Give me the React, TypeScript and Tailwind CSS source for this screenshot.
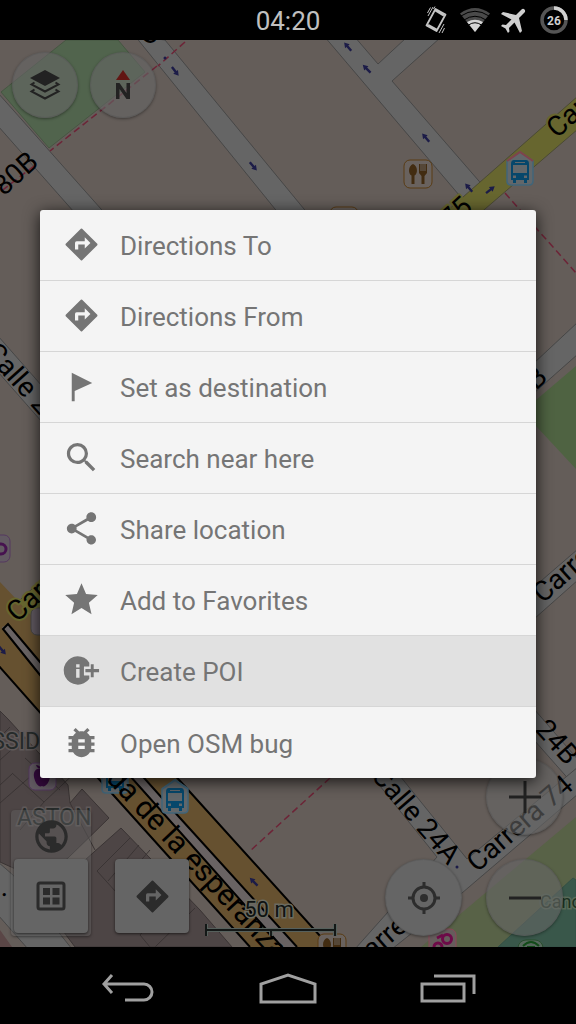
import { useState } from 'react';
import type { ReactNode } from 'react';
import { MdBugReport, MdFlight, MdPublic, MdSearch, MdShare, MdStar } from 'react-icons/md';

interface MenuItem {
  label: string;
  icon: ReactNode;
}

function DirectionsIcon() {
  return (
    <svg viewBox="0 0 24 24" className="w-[39px] h-[39px]" fill="currentColor">
      <path
        fillRule="evenodd"
        d="M12.400 2.300L21.700 11.600Q22 12 21.700 12.400L12.400 21.700Q12 22 11.600 21.700L2.300 12.400Q2 12 2.300 11.600L11.600 2.300Q12 2 12.400 2.300zM14 14.500L17.500 11L14 7.500V10H9Q8 10 8 11V15H10V12H14z"
      />
    </svg>
  );
}

function FlagIcon() {
  return (
    <svg viewBox="0 0 40 40" className="w-full h-full" fill="currentColor">
      <path d="M10 6L31 16.500L13 24.500V35H10z" />
    </svg>
  );
}

function PoiIcon() {
  return (
    <svg viewBox="0 0 40 40" className="w-full h-full overflow-visible" fill="currentColor">
      <path
        fillRule="evenodd"
        d="M16 5.500A14.500 14.500 0 1 0 28 28.500V25H22.500V16H28V12A14.500 14.500 0 0 0 16 5.500zM14.500 13.500H18V17H14.500zM14.500 18.500H18V27.500H14.500z"
      />
      <path d="M29.500 13.500H32.500V18.500H38V21.800H32.500V27H29.500V21.800H24V18.500H29.500z" />
    </svg>
  );
}

function LayersIcon() {
  return (
    <svg viewBox="0 0 32 32" className="w-8 h-8" fill="none" stroke="currentColor" strokeWidth="2">
      <path d="M16 1L31 9L16 17L1 9z" fill="currentColor" stroke="none" />
      <path d="M5.500 13.500L2.500 15.500L16 22.500L29.500 15.500L26.500 13.500" />
      <path d="M5.500 20.500L2.500 22.500L16 29.500L29.500 22.500L26.500 20.500" />
    </svg>
  );
}

function VibrateIcon() {
  return (
    <svg viewBox="0 0 24 28" className="w-6 h-7" fill="none" stroke="#c4c4c4">
      <path d="M11.500 3L21.500 8.500L12.500 25L2.500 19.500z" strokeWidth="1.800" strokeLinejoin="round" />
      <path d="M11 4L20 9.500M4 19L13 24" strokeWidth="2.500" />
      <path d="M9 1L4 10M6.500 1.500L3.500 7M11 0.500L9.500 3M20 18L15 27M20.500 22L18 27" strokeWidth="1" />
    </svg>
  );
}

function WifiIcon() {
  return (
    <svg viewBox="0 0 30 24" className="w-[30px] h-6">
      <path d="M0 5.500Q15 -5.500 30 5.500L15 24z" fill="#4a4a4a" />
      <path d="M7 14Q15 9.500 23 14L15 24z" fill="#d6d6d6" />
      <path d="M1 8Q15 -1.500 29 8M4 12Q15 4.500 26 12M8.500 17Q15 12.500 21.500 17" fill="none" stroke="#000" strokeWidth="1" />
    </svg>
  );
}

function BatteryIcon() {
  return (
    <svg viewBox="0 0 28 28" className="w-7 h-7" fill="none">
      <circle cx="14" cy="14" r="12" stroke="#555" strokeWidth="3.500" />
      <path d="M14 2A12 12 0 0 1 26 14" stroke="#d0d0d0" strokeWidth="3.500" />
      <text x="14" y="18.500" textAnchor="middle" fill="#cfcfcf" className="font-[Roboto,sans-serif] text-[12px] font-bold">
        26
      </text>
    </svg>
  );
}

function Arrow({ x, y, angle }: { x: number; y: number; angle: number }) {
  return (
    <path
      d="M-5 -1.200H1V-3L6 0L1 3V1.200H-5z"
      fill="#1c1c48"
      transform={`translate(${x} ${y}) rotate(${angle})`}
    />
  );
}

function BusStop({ x, y, roof }: { x: number; y: number; roof: string }) {
  return (
    <g transform={`translate(${x} ${y})`}>
      <path d="M-13 -8L0 -17L13 -8V12Q13 16 9 16H-9Q-13 16 -13 12z" fill="#62676a" stroke="#416579" strokeWidth="1.500" />
      <path d="M-13 -8L0 -17L13 -8" fill="none" stroke={roof} strokeWidth="2" />
      <path
        fillRule="evenodd"
        fill="#06476b"
        d="M-6 -9H6Q9 -9 9 -5V11H7V14H4V11H-4V14H-7V11H-9V-5Q-9 -9 -6 -9zM-7 -4V4H7V-4zM-5 -7V-6H5V-7zM-7 6.500V9H-4V6.500zM4 6.500V9H7V6.500z"
      />
    </g>
  );
}

function Restaurant({ x, y }: { x: number; y: number }) {
  return (
    <g transform={`translate(${x} ${y})`}>
      <rect x="-14" y="-14" width="28" height="28" rx="6" fill="#69625e" stroke="#5a3c14" />
      <path
        fill="#422c11"
        d="M-5 -10C-10 -8 -10 0 -6.500 1.500V10H-3.500V1.500C0 0 0 -8 -5 -10zM1 -10V-1L3.500 2V10H6.500V2L9 -1V-10H7.500V-3H6.500V-10H5.500V-3H4.500V-10H3.500V-3H2.500V-10z"
      />
    </g>
  );
}

function MapCanvas() {
  return (
    <svg
      viewBox="0 40 576 907"
      preserveAspectRatio="xMidYMid slice"
      className="absolute inset-0 w-full h-full bg-[#645d59]"
      aria-label="Map"
    >
      {/* parks */}
      <path d="M66 40H118L145 72L49 148L1 92z" fill="#51644d" stroke="#465642" />
      <path d="M536 400L576 366V469L536 426z" fill="#4f6342" />
      <path d="M576 817L421 947H576z" fill="#586247" />
      <path d="M573 878L498 947H576V880z" fill="#39574a" stroke="#345046" />

      {/* buildings */}
      <g fill="#4d4545" stroke="#3a3434">
        <path d="M0 711L8 719L68 785L70 803L82 789L109 818L68 858L40 880L0 862z" />
        <path d="M121 828L200 910L232 947H75L40 900z" />
        <path
          fill="none"
          d="M0 737L10 727M0 760L28 735M12 773L44 802L80 768M0 803L55 755M12 774L0 785M44 802L20 830M25 758L60 790M70 803L95 850M97 871L130 838M108 881L139 845M97 871L125 902M115 890L150 850M140 935L180 890M155 947L195 908M140 935L150 947"
        />
      </g>

      {/* streets */}
      <g fill="#656565" stroke="#474747">
        <path d="M-2 93L101 209L140 255H112L-2 126z" />
        <path d="M135 36L275 209L310 250H338L304 209L165 40z" />
        <path d="M324 36L465 202L485 188L392 81L440 38H406L378 64L354 36z" />
        <path d="M-2 336L42 386V422L-2 372z" />
        <path d="M534 363L578 322V354L534 393z" />
        <path d="M534 587L578 549V580L534 619z" />
        <path d="M534 709L580 762V792L534 740z" />
        <path d="M-2 862L13 875L72 949H28L-2 915z" />
        <path d="M372 776L437 857L355 949H392L462 893L578 794V767L467 859L400 776z" />
      </g>
      <path d="M0 930L12 947H0z" fill="#5a4646" />

      {/* secondary road */}
      <path d="M578 96L430 226L-2 620L20 640L485 209L578 129z" fill="#67662f" stroke="#4b4a34" />

      {/* avenue */}
      <path d="M-2 580L17 600L190 792L330 947H250L98 778L-2 665z" fill="#665130" />
      <path d="M2 627L40 675L180 832L282 947H297L180 818L40 662L8 625z" fill="#696363" />
      <g fill="none" stroke="#000" strokeWidth="2">
        <path d="M40 626L190 792L330 947" />
        <path d="M-2 665L98 778L250 947" />
        <path d="M282 947L180 832L40 675L3 629L8 624L40 662L180 818L297 947" />
      </g>

      <g fill="none" stroke="#6d2437" strokeWidth="1.500" strokeDasharray="7 4">
        <path d="M185 42L158 66" />
        <path d="M157 66L50 151" />
        <path d="M34 166L0 192" />
        <path d="M505 193L576 273" />
        <path d="M330 778L250 851" />
      </g>

      <Arrow x={175} y={71} angle={52} />
      <Arrow x={253} y={166} angle={50} />
      <Arrow x={348} y={47} angle={-130} />
      <Arrow x={367} y={69} angle={-135} />
      <Arrow x={426} y={138} angle={-130} />
      <Arrow x={469} y={188} angle={-130} />
      <Arrow x={490} y={190} angle={-38} />
      <Arrow x={254} y={882} angle={-135} />
      <Arrow x={2} y={650} angle={50} />
      <circle cx="165" cy="58" r="1.500" fill="#1c1c48" />
      <circle cx="457" cy="867" r="1.500" fill="#1c1c48" />

      <Restaurant x={418} y={174} />
      <Restaurant x={344} y={221} />
      <Restaurant x={332} y={948} />
      <BusStop x={520} y={169} roof="#80434b" />
      <BusStop x={115} y={777} roof="#416579" />
      <BusStop x={175} y={797} roof="#416579" />

      {/* shops */}
      <g fill="#625a62" stroke="#553860">
        <rect x="-18" y="535" width="28" height="27" rx="6" />
        <rect x="29" y="763" width="27" height="27" rx="6" />
        <rect x="31" y="608" width="27" height="27" rx="6" stroke="#454545" />
      </g>
      <circle cx="1" cy="549" r="5" fill="none" stroke="#46124f" strokeWidth="3" />
      <path d="M42 770C38 767 33 770 34 777C35 783 39 788 42 786C45 788 50 782 50 776C50 769 45 768 42 770zM41 768C40 766 38 765 36 765C37 768 39 769 41 768z" fill="#34093d" />
      <g fill="none" stroke="#6d0a48" strokeWidth="3">
        <rect x="429" y="929" width="27" height="28" rx="6" fill="#665c5c" stroke="#8c4658" strokeWidth="1" />
        <circle cx="447" cy="939" r="4.500" />
        <path d="M437 938L443 935M434 947A4 4 0 0 1 442 947" />
      </g>
      <rect x="518" y="940" width="25" height="20" rx="8" fill="#56685c" stroke="#294e2d" />
      <path d="M523 946Q531 938 539 946M527 947H535" stroke="#124b18" strokeWidth="2" fill="none" />

      <g fill="#000" className="font-[Roboto,sans-serif] text-[28px]">
        <text transform="translate(40 164) rotate(-42)" textAnchor="end">80B</text>
        <text transform="translate(40 416) rotate(48)" textAnchor="end">Calle 2</text>
        <text transform="translate(148 47) rotate(-42)">C</text>
        <g stroke="#67662f" strokeWidth="4" paintOrder="stroke" strokeLinejoin="round">
          <text transform="translate(557 139) rotate(-42)">Carrera</text>
          <text transform="translate(474 209) rotate(-42)" textAnchor="end">75</text>
          <text transform="translate(17 623) rotate(-42)">Carrera</text>
        </g>
        <text transform="translate(549 379) rotate(-42)" textAnchor="end">B</text>
        <text transform="translate(543 604) rotate(-42)">Carrera</text>
        <text transform="translate(534 730) rotate(48)">24B</text>
        <text transform="translate(448 866) rotate(49)" textAnchor="end">Calle 24A</text>
        <text transform="translate(477 873) rotate(-41)">Carrera 74</text>
        <text transform="translate(409 928) rotate(-41)" textAnchor="end">Carre</text>
        <text transform="translate(105 779) rotate(47)" className="text-[30px]">
          da de la esperanza
        </text>
        <text transform="translate(8 893) rotate(-42)" textAnchor="end">C.</text>
      </g>
      <g className="font-[Roboto,sans-serif] text-[23px]" stroke="#5f5959" strokeWidth="3" paintOrder="stroke" fill="#262b2a">
        <text x="40" y="749" textAnchor="end">SSID</text>
        <text x="17" y="825">ASTON</text>
      </g>
      <text x="540" y="908" fill="#1c3020" stroke="#586a58" strokeWidth="3" paintOrder="stroke" className="font-[Roboto,sans-serif] text-[18px]">
        Cano
      </text>
    </svg>
  );
}

const roundButton = 'flex items-center justify-center rounded-full border border-[#55555580] text-[#222] shadow-[0_1px_3px_rgba(0,0,0,0.4)]';
const squareButton = 'flex items-center justify-center w-[74px] h-[74px] rounded-[4px] bg-[#656565] text-[#2b2b2b] shadow-[0_1px_3px_rgba(0,0,0,0.6)]';

const menuItems: MenuItem[] = [
  { label: 'Directions To', icon: <DirectionsIcon /> },
  { label: 'Directions From', icon: <DirectionsIcon /> },
  { label: 'Set as destination', icon: <FlagIcon /> },
  { label: 'Search near here', icon: <MdSearch className="w-full h-full" /> },
  { label: 'Share location', icon: <MdShare className="w-full h-full" /> },
  { label: 'Add to Favorites', icon: <MdStar className="w-full h-full" /> },
  { label: 'Create POI', icon: <PoiIcon /> },
  { label: 'Open OSM bug', icon: <MdBugReport className="w-full h-full" /> },
];

function MapControls() {
  return (
    <div className="relative flex-1 flex flex-col justify-between">
      <div className="flex gap-3 p-3">
        <button aria-label="Layers" className={`${roundButton} w-[66px] h-[66px] bg-[#65656599]`}>
          <LayersIcon />
        </button>
        <button aria-label="Compass" className={`${roundButton} w-[66px] h-[66px] bg-[#65656599]`}>
          <svg viewBox="0 0 20 32" className="w-5 h-8">
            <path d="M10 1L17 11H3z" fill="#621613" />
            <path d="M3 30V14H6.500L13.500 24V14H17V30H13.500L6.500 20V30z" fill="#222" />
          </svg>
        </button>
      </div>

      <div className="flex items-end justify-between pl-[11px] pr-[13px] pb-[11px]">
        <div className="flex items-end gap-4">
          <div className="flex items-end gap-6">
            <div className="flex flex-col w-20 p-[3px] rounded-[4px] bg-[#65656566] shadow-[0_1px_3px_rgba(0,0,0,0.4)]">
              <button aria-label="Configure map" className="flex items-center justify-center h-[46px] text-[#2b2b2b]">
                <MdPublic className="w-[39px] h-[39px]" />
              </button>
              <button aria-label="Menu" className={squareButton}>
                <svg viewBox="0 0 30 30" className="w-[30px] h-[30px]" fill="currentColor">
                  <rect x="2" y="2" width="26" height="26" rx="2" fill="none" stroke="currentColor" strokeWidth="3" />
                  <path d="M7 7H14V14H7zM16.500 7H23.500V14H16.500zM7 16.500H14V23.500H7zM16.500 16.500H23.500V23.500H16.500z" />
                </svg>
              </button>
            </div>
            <button aria-label="Directions" className={`${squareButton} mb-[3px]`}>
              <DirectionsIcon />
            </button>
          </div>
          <div className="flex flex-col items-center w-[132px]">
            <svg viewBox="0 0 132 40" className="w-full h-10" fill="none">
              <text x="64" y="21" textAnchor="middle" fill="#0f1312" stroke="#6b6b60" strokeWidth="3" paintOrder="stroke" className="font-[Roboto,sans-serif] text-[22px]">
                50 m
              </text>
              <path d="M1 28V40M130 28V40M1 34H130M66 34V40" stroke="#56605c" strokeWidth="4" />
              <path d="M1 28V40M130 28V40M1 34H130M66 34V40" stroke="#141817" strokeWidth="2" />
            </svg>
          </div>
        </div>

        <div className="flex items-end gap-6">
          <button aria-label="My location" className={`${roundButton} w-[77px] h-[77px] bg-[#656565]`}>
            <svg viewBox="0 0 32 32" className="w-8 h-8 text-[#2d2d2d]" fill="none" stroke="currentColor" strokeWidth="3">
              <circle cx="16" cy="16" r="11" />
              <circle cx="16" cy="16" r="4" fill="currentColor" stroke="none" />
              <path d="M16 0V6M16 26V32M0 16H6M26 16H32" />
            </svg>
          </button>
          <div className="flex flex-col gap-6">
            <button aria-label="Zoom in" className={`${roundButton} w-[77px] h-[77px] bg-[#65656599]`}>
              <svg viewBox="0 0 32 32" className="w-8 h-8" stroke="currentColor" strokeWidth="3">
                <path d="M16 0V32M0 16H32" />
              </svg>
            </button>
            <button aria-label="Zoom out" className={`${roundButton} w-[77px] h-[77px] bg-[#65656599]`}>
              <svg viewBox="0 0 32 32" className="w-8 h-8" stroke="currentColor" strokeWidth="3">
                <path d="M0 16H32" />
              </svg>
            </button>
          </div>
        </div>
      </div>
    </div>
  );
}

export default function App() {
  const [selected, setSelected] = useState('Create POI');

  return (
    <div className="flex flex-col min-h-screen bg-black font-[Roboto,sans-serif]">
      <header className="flex items-center h-10 px-2 text-[#c0c0c0]">
        <div className="flex-1" />
        <time className="pt-[2px] text-[26px] leading-8">04:20</time>
        <div className="flex-1 flex items-center justify-end gap-2">
          <div className="flex items-center gap-3">
            <VibrateIcon />
            <WifiIcon />
          </div>
          <MdFlight className="w-[34px] h-[34px] rotate-45 text-[#cfcfcf]" />
          <BatteryIcon />
        </div>
      </header>

      <main className="relative flex-1 flex flex-col overflow-hidden">
        <MapCanvas />
        <MapControls />

        <div className="absolute inset-0 flex items-center justify-center px-10">
          <div role="menu" className="w-full rounded-[3px] overflow-hidden bg-[#f4f4f4] shadow-[0_3px_16px_rgba(0,0,0,0.8)]">
            {menuItems.map((item) => (
              <button
                key={item.label}
                role="menuitem"
                onClick={() => setSelected(item.label)}
                className={`flex items-center gap-[19px] w-full h-[71px] pl-[22px] border-b border-[#d6d6d6] last:border-b-0 text-left text-[26px] leading-8 text-[#757575] ${
                  selected === item.label ? 'bg-[#e1e1e1]' : ''
                }`}
              >
                <span className="w-[39px] h-[39px] shrink-0">{item.icon}</span>
                <span className="pt-[3px]">{item.label}</span>
              </button>
            ))}
          </div>
        </div>
      </main>

      <nav className="flex items-center justify-center h-[77px] pt-1 text-[#a0a0a0]">
        <button aria-label="Back" className="flex justify-center w-40">
          <svg viewBox="0 0 54 30" className="w-[54px] h-[30px]" fill="none" stroke="currentColor" strokeWidth="3">
            <path d="M11 2L3 11L11 20M3 11H43A8 8 0 0 1 43 27H24" />
          </svg>
        </button>
        <button aria-label="Home" className="flex justify-center w-40">
          <svg viewBox="0 0 58 32" className="w-[58px] h-8" fill="none" stroke="currentColor" strokeWidth="3">
            <path d="M2 30V12L29 3L56 12V30z" />
          </svg>
        </button>
        <button aria-label="Recent apps" className="flex justify-center w-40">
          <svg viewBox="0 0 56 30" className="w-14 h-[30px]" fill="none" stroke="currentColor" strokeWidth="3">
            <path d="M2 11H44V28H2zM14 3H54V21" />
          </svg>
        </button>
      </nav>
    </div>
  );
}
